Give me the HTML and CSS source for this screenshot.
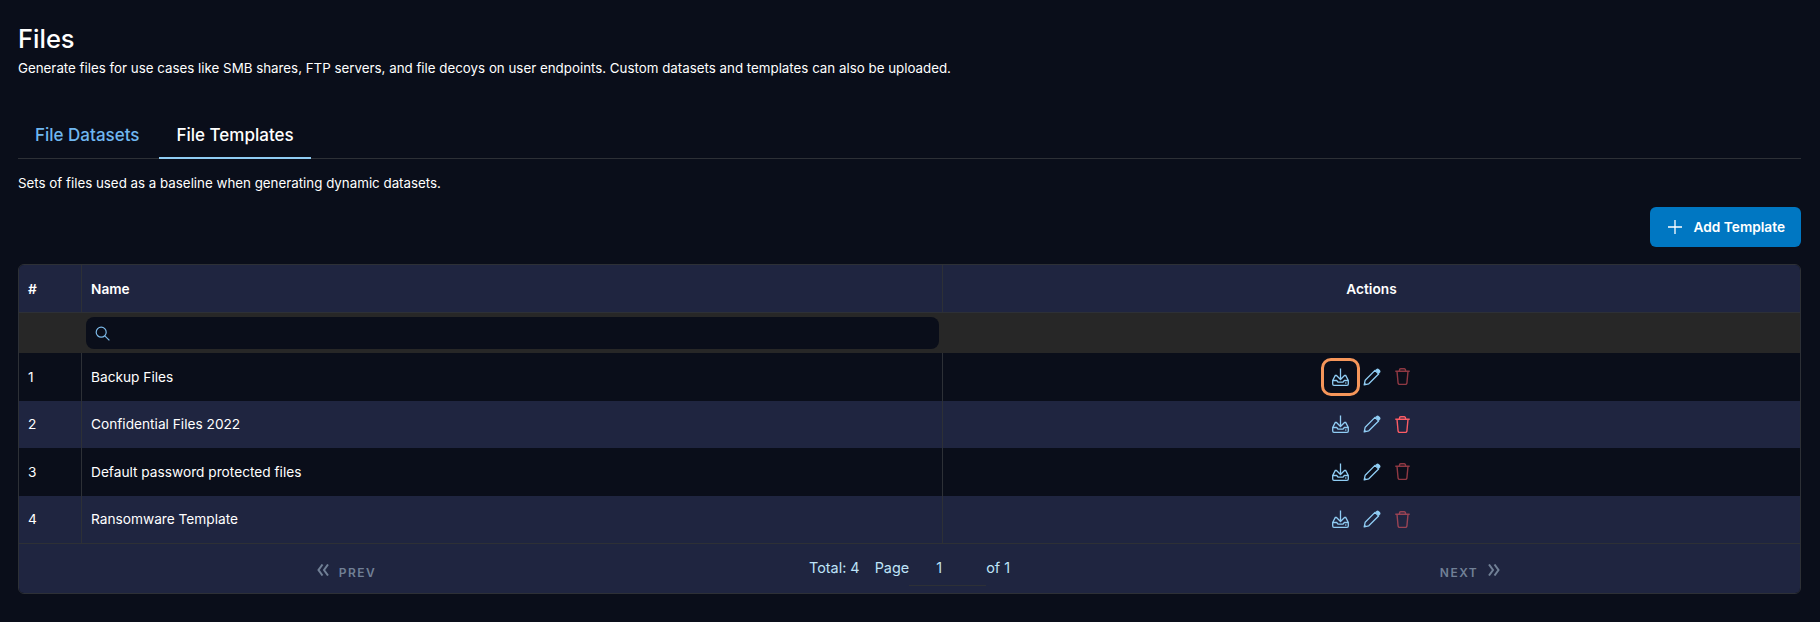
FILE: index.html
```html
<!DOCTYPE html>
<html lang="en">
<head>
  <meta charset="UTF-8">
  <title>Files</title>
  <link rel="stylesheet" href="styles.css">
</head>
<body>
  <!-- shared icons for the action column -->
  <svg class="sprites">
    <symbol id="icon-download" viewBox="0 0 17 18">
      <path d="M8.500 .5V12M4.500 7.500l4 4 4-4M4.800 7.500H3.300L.7 12.500V16a1.300 1.300 0 0 0 1.300 1.300h13a1.300 1.300 0 0 0 1.300-1.300V12.500L13.700 7.500h-1.500M.7 12.500h4l1.300 1.700h5l1.300-1.700h4" fill="none" stroke="currentColor" stroke-width="1.300"/>
      <circle cx="13.800" cy="15" r=".8" fill="currentColor"/>
    </symbol>
    <symbol id="icon-edit" viewBox="0 0 18 18">
      <path d="M1.200 16.800l1-4.600L12 2.400 15.600 6 5.800 15.800z" fill="none" stroke="currentColor" stroke-width="1.300" stroke-linejoin="round"/>
      <path d="M12.300 2.100l.9-.9a2 2 0 0 1 2.800 0l.8.8a2 2 0 0 1 0 2.800l-.9.9z" fill="currentColor"/>
      <path d="M1 17l.6-2.600 2 2z" fill="currentColor"/>
    </symbol>
    <symbol id="icon-trash" viewBox="0 0 15 17">
      <path d="M.3 3.300h14.400M4.500 3.300V2a1.200 1.200 0 0 1 1.200-1.200h3.600A1.200 1.200 0 0 1 10.500 2v1.300M2 3.300l1.100 11.900a1.400 1.400 0 0 0 1.400 1.200h6a1.400 1.400 0 0 0 1.400-1.200L13 3.300" fill="none" stroke="currentColor" stroke-width="1.400"/>
    </symbol>
  </svg>

  <h1 class="title">Files</h1>
  <p class="subtitle">Generate files for use cases like SMB shares, FTP servers, and file decoys on user endpoints. Custom datasets and templates can also be uploaded.</p>

  <div class="tabs">
    <div class="tab">File Datasets</div>
    <div class="tab active">File Templates</div>
  </div>
  <p class="tab-note">Sets of files used as a baseline when generating dynamic datasets.</p>

  <div class="toolbar">
    <button class="add-btn">
      <svg width="14" height="14" viewBox="0 0 14 14"><path d="M7 0v14M0 7h14" stroke="currentColor" stroke-width="1.300" fill="none"/></svg>
      Add Template
    </button>
  </div>

  <div class="panel">
    <table class="grid">
      <thead>
        <tr class="head">
          <th class="col-num">#</th>
          <th class="col-name">Name</th>
          <th class="col-actions">Actions</th>
        </tr>
        <tr class="filters">
          <td></td>
          <td>
            <div class="search">
              <svg width="15" height="15" viewBox="0 0 15 15" fill="none" stroke="#7cb9e8" stroke-width="1.200"><circle cx="6.200" cy="6.200" r="5"/><path d="M9.800 9.800l4.600 4.600"/></svg>
            </div>
          </td>
          <td></td>
        </tr>
      </thead>
      <tbody>
        <tr>
          <td>1</td>
          <td>Backup Files</td>
          <td>
            <div class="actions">
              <span class="icon-btn focused"><svg class="ico-download"><use href="#icon-download"/></svg></span>
              <span class="icon-btn"><svg class="ico-edit"><use href="#icon-edit"/></svg></span>
              <span class="icon-btn"><svg class="ico-trash dim"><use href="#icon-trash"/></svg></span>
            </div>
          </td>
        </tr>
        <tr>
          <td>2</td>
          <td>Confidential Files 2022</td>
          <td>
            <div class="actions">
              <span class="icon-btn"><svg class="ico-download"><use href="#icon-download"/></svg></span>
              <span class="icon-btn"><svg class="ico-edit"><use href="#icon-edit"/></svg></span>
              <span class="icon-btn"><svg class="ico-trash"><use href="#icon-trash"/></svg></span>
            </div>
          </td>
        </tr>
        <tr>
          <td>3</td>
          <td>Default password protected files</td>
          <td>
            <div class="actions">
              <span class="icon-btn"><svg class="ico-download"><use href="#icon-download"/></svg></span>
              <span class="icon-btn"><svg class="ico-edit"><use href="#icon-edit"/></svg></span>
              <span class="icon-btn"><svg class="ico-trash dim"><use href="#icon-trash"/></svg></span>
            </div>
          </td>
        </tr>
        <tr>
          <td>4</td>
          <td>Ransomware Template</td>
          <td>
            <div class="actions">
              <span class="icon-btn"><svg class="ico-download"><use href="#icon-download"/></svg></span>
              <span class="icon-btn"><svg class="ico-edit"><use href="#icon-edit"/></svg></span>
              <span class="icon-btn"><svg class="ico-trash dim"><use href="#icon-trash"/></svg></span>
            </div>
          </td>
        </tr>
      </tbody>
    </table>

    <div class="pager">
      <div class="pager-btn prev">
        <svg class="chevrons" width="12" height="12" viewBox="0 0 12 12" fill="none" stroke="currentColor" stroke-width="2"><path d="M5.500 .5L1.500 6l4 5.500M11 .5L7 6l4 5.500"/></svg>
        PREV
      </div>
      <div class="pager-info">
        <span>Total: 4</span>
        <span class="page-label">Page</span>
        <span class="page-input">1</span>
        <span>of 1</span>
      </div>
      <div class="pager-btn">
        NEXT
        <svg class="chevrons" width="12" height="12" viewBox="0 0 12 12" fill="none" stroke="currentColor" stroke-width="2"><path d="M1 .5L5 6l-4 5.500M6.500 .5l4 5.500-4 5.500"/></svg>
      </div>
    </div>
  </div>
</body>
</html>
```

FILE: styles.css
```css
body {
  margin: 0;
  padding: 24px 19px 0 18px;
  background-color: #0a0e1a;
  color: white;
  font-family: Inter, "Liberation Sans", sans-serif;
  font-size: 14px;
}
.sprites {
  display: none;
}
.title {
  margin: 0;
  font-size: 25.500px;
  font-weight: 500;
  line-height: 30px;
}
.subtitle {
  margin: 5px 0 0;
  font-size: 13.330px;
  line-height: 18px;
}
.tabs {
  display: flex;
  gap: 3px;
  height: 46px;
  margin-top: 36px;
  box-sizing: border-box;
  border-bottom: 1px solid #2d3036;
}
.tab {
  height: 46px;
  padding: 0 17px;
  box-sizing: border-box;
  font-size: 17px;
  font-weight: 500;
  line-height: 44px;
  color: #70b7f0;
}
.tab.active {
  color: white;
  border-bottom: 2px solid #90cdf4;
}
.tab-note {
  margin: 15px 0 0;
  font-size: 13.330px;
  line-height: 18px;
}
.toolbar {
  display: flex;
  justify-content: flex-end;
  margin-top: 15px;
}
.add-btn {
  display: flex;
  align-items: center;
  gap: 12px;
  height: 40px;
  padding: 0 16px 0 18px;
  border: 0;
  border-radius: 6px;
  background-color: #0077c2;
  color: white;
  font-family: inherit;
  font-size: 13.700px;
  font-weight: 600;
}
.panel {
  margin-top: 17px;
  border: 1px solid #2d3036;
  border-radius: 6px;
  overflow: hidden;
}
.grid {
  width: 100%;
  border-collapse: collapse;
  table-layout: fixed;
}
.grid th, .grid td {
  padding: 0 9px;
  font-size: 13.700px;
  text-align: left;
  border-right: 1px solid #2d3036;
}
.grid th:last-child, .grid td:last-child {
  border-right: 0;
}
.col-num { width: 44px; }
.col-name { width: 842px; }
.grid th.col-actions { text-align: center; }
.head th {
  height: 47px;
  background-color: #1f2540;
  font-weight: 600;
}
.grid .filters td {
  height: 40px;
  padding: 0 4px;
  background-color: #272727;
  border-top: 1px solid #2d3036;
  border-right: 0;
}
.search {
  display: flex;
  align-items: center;
  height: 32px;
  padding-left: 9px;
  border-radius: 8px;
  background-color: #0a0e1a;
}
tbody tr {
  height: 47.500px;
}
tbody tr:nth-child(even) td {
  background-color: #1f2540;
}
.actions {
  display: flex;
  justify-content: center;
  align-items: center;
}
.icon-btn {
  display: flex;
  align-items: center;
  justify-content: center;
  width: 31px;
  height: 30px;
  border-radius: 6px;
  color: #90cdf4;
}
.icon-btn.focused {
  outline: 3px solid #f6965a;
  outline-offset: 1.500px;
}
.ico-download { width: 17px; height: 18px; }
.ico-edit { width: 18px; height: 18px; }
.ico-trash { width: 15px; height: 17px; color: #fc5c65; }
.ico-trash.dim { opacity: 0.55; }
.pager {
  display: flex;
  height: 50px;
  box-sizing: border-box;
  background-color: #1f2540;
  border-top: 1px solid #2d3036;
}
.pager-btn {
  display: flex;
  align-items: center;
  justify-content: center;
  gap: 10px;
  width: 660px;
  padding-top: 8px;
  box-sizing: border-box;
  color: #718096;
  font-size: 12px;
  font-weight: 600;
  letter-spacing: 1.500px;
}
.pager-btn.prev {
  padding-right: 5px;
}
.chevrons {
  margin-top: -6px;
}
.pager-info {
  flex: 1;
  display: flex;
  justify-content: center;
  padding-top: 14px;
  color: #bee3f8;
  font-size: 14.400px;
  line-height: 20px;
}
.page-label {
  margin-left: 15px;
}
.page-input {
  width: 77px;
  height: 28px;
  padding-left: 27px;
  box-sizing: border-box;
  border-bottom: 1px solid #2d3036;
}
```
